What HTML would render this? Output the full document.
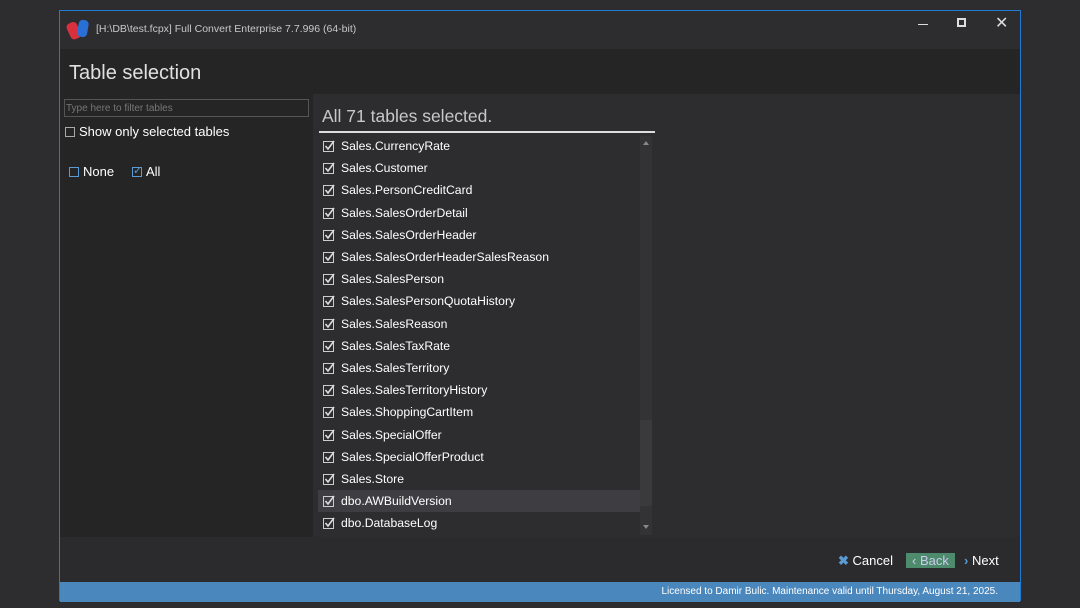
<!DOCTYPE html>
<html><head><meta charset="utf-8"><style>
*{margin:0;padding:0;box-sizing:border-box}
body{width:1080px;height:608px;background:#2d2d30;font-family:"Liberation Sans",sans-serif;position:relative;overflow:hidden;color:#fff}
.win{position:absolute;left:59px;top:10px;width:962px;height:591px;border:1px solid #1e7ad4;border-bottom:none;background:#252526}
.title{position:absolute;left:0;top:0;width:960px;height:38px;background:#2d2d30}
.t{position:absolute;left:36px;top:12px;font-size:10.5px;color:#c8c8c8}
.hdr{position:absolute;left:9px;top:51px;font-size:20px;color:#e0e0e0}
.filter{position:absolute;left:4px;top:88px;width:245px;height:18px;border:1px solid #555;background:#252526;font-size:10px;color:#777;padding:3px 1px}
.cb{display:inline-block;width:10px;height:10px;border:1px solid #aaa;vertical-align:-1px;margin-right:4px}
.cbb{border-color:#5b9bd5}
.lbl{position:absolute;font-size:13px;color:#fff}
.right{position:absolute;left:253px;top:83px;width:707px;height:443px;background:#2d2d30}
.sel{position:absolute;left:9px;top:12px;font-size:17.5px;color:#c8c8c8}
.line{position:absolute;left:6px;top:37px;width:336px;height:2px;background:#ddd}
.row{position:absolute;left:5px;width:322px;height:22px;font-size:12.2px;line-height:22px;padding-left:23px;color:#fff}
.row svg{position:absolute;left:5px;top:5px}
.sb{position:absolute;left:327px;top:42px;width:12px;height:399px;background:#333336}
.thumb{position:absolute;left:0;top:284px;width:12px;height:86px;background:#3a3a3d}
.foot{position:absolute;left:0;top:526px;width:960px;height:45px;background:#2b2b2d}
.status{position:absolute;left:0;top:571px;width:960px;height:20px;background:#4a87bd;font-size:10px;color:#fff;text-align:right;padding:4px 22px 0 0}
.btn{position:absolute;top:542px;font-size:13px}
</style></head><body>
<div class="win">
<div class="title">
<svg style="position:absolute;left:5px;top:5px" width="28" height="26"><rect x="3" y="6" width="11" height="17" rx="4" fill="#d8303c" transform="rotate(-25 9 14)"/><rect x="13" y="4" width="10" height="17" rx="4" fill="#2a6fd6" transform="rotate(10 18 12)"/></svg>
<div class="t">[H:\DB\test.fcpx] Full Convert Enterprise 7.7.996 (64-bit)</div>
<div style="position:absolute;left:858px;top:13px;width:10px;height:1px;background:#ddd"></div>
<div style="position:absolute;left:897px;top:7px;width:9px;height:9px;border:2px solid #ddd"></div>
<div style="position:absolute;left:935px;top:2px;font-size:16px;color:#ddd">✕</div>
</div>
<div style="position:absolute;left:0;top:38px;width:960px;height:45px;background:#252526"></div>
<div class="hdr">Table selection</div>
<div class="filter">Type here to filter tables</div>
<div class="lbl" style="left:5px;top:113px"><span class="cb"></span>Show only selected tables</div>
<div class="lbl" style="left:9px;top:153px"><span class="cb cbb"></span>None</div>
<div class="lbl" style="left:72px;top:153px"><span class="cb cbb" style="position:relative"><span style="position:absolute;left:0;top:-4px;font-size:11px;color:#5b9bd5">✓</span></span>All</div>
<div class="right">
<div class="sel">All 71 tables selected.</div>
<div class="line"></div>
<div class="row" style="top:396px;background:#3e3e42"></div>
<div id="rows"></div>
<div class="sb"><div class="thumb"></div><div style="position:absolute;left:3px;top:5px;border:3px solid transparent;border-bottom:4px solid #888;border-top:none"></div><div style="position:absolute;left:3px;top:389px;border:3px solid transparent;border-top:4px solid #888;border-bottom:none"></div></div>
</div>
<div class="foot"></div>
<div class="btn" style="left:778px"><span style="color:#5b9bd5;font-weight:bold">✖</span> Cancel</div>
<div class="btn" style="left:846px;background:#4e8a6c;padding:0 6px;color:#cce">‹ Back</div>
<div class="btn" style="left:904px"><span style="color:#5b9bd5;font-weight:bold">›</span> Next</div>
<div class="status">Licensed to Damir Bulic. Maintenance valid until Thursday, August 21, 2025.</div>
</div>
<script>
var n=["Sales.CurrencyRate","Sales.Customer","Sales.PersonCreditCard","Sales.SalesOrderDetail","Sales.SalesOrderHeader","Sales.SalesOrderHeaderSalesReason","Sales.SalesPerson","Sales.SalesPersonQuotaHistory","Sales.SalesReason","Sales.SalesTaxRate","Sales.SalesTerritory","Sales.SalesTerritoryHistory","Sales.ShoppingCartItem","Sales.SpecialOffer","Sales.SpecialOfferProduct","Sales.Store","dbo.AWBuildVersion","dbo.DatabaseLog"],h="";
n.forEach(function(s,i){h+='<div class="row" style="top:'+(41+i*22.2)+'px"><svg width="12" height="12"><rect x="0.5" y="1.5" width="10" height="10" fill="none" stroke="#ccc"/><path d="M2.5 6l2.5 3 6-8" fill="none" stroke="#ddd" stroke-width="1.6"/></svg>'+s+'</div>'});
document.getElementById("rows").innerHTML=h;
</script>
</body></html>
